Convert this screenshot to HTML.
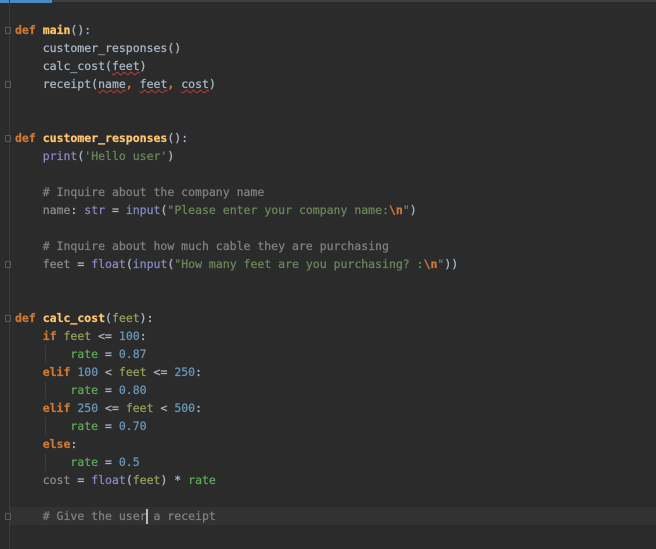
<!DOCTYPE html>
<html><head><meta charset="utf-8"><style>
html,body{margin:0;padding:0;background:#2b2b2b;width:656px;height:549px;overflow:hidden}
#ed{position:relative;width:656px;height:549px;background:#2b2b2b;font-family:"DejaVu Sans Mono","Liberation Mono",monospace;font-size:11.5px;color:#a9b7c6;-webkit-text-stroke:0.25px currentColor}
.top{position:absolute;left:0;top:0;width:656px;height:2px;background:#3c3f41}
.blue{position:absolute;left:0;top:0;width:52px;height:3px;background:#4a88c7}
.gut{position:absolute;left:9px;top:0;width:1px;height:549px;background:#3a3a3a}
.cur{position:absolute;left:10px;top:507px;width:646px;height:18px;background:#323232}
.ln{position:absolute;left:15px;height:18px;line-height:18px;white-space:pre}
.k{color:#cc7832;font-weight:bold}.f{color:#ffc66d;font-weight:bold}.n{color:#6897bb}.s{color:#6a8759}.c{color:#808080}
.b{color:#8888c6}.p{color:#94a05a}.r{color:#5fa85b}.g{color:#8a8a8a}
.w{text-decoration:underline wavy #b04040;text-decoration-thickness:1px}
.fold{position:absolute;left:5px;width:6px;height:7px;border:1px solid #5a5a5a;border-radius:1px;box-sizing:border-box}
.guide{position:absolute;left:45px;width:1px;height:18px;background:#3b3b3b}
.caret{display:inline-block;width:2px;height:15px;background:#bbb;vertical-align:middle;margin:0 -1px}
</style></head><body><div id="ed">
<div class="top"></div><div class="blue"></div><div class="gut"></div><div class="cur"></div>
<div class="fold" style="top:27px"></div><div class="fold" style="top:81px"></div>
<div class="fold" style="top:135px"></div><div class="fold" style="top:261px"></div>
<div class="fold" style="top:315px"></div><div class="fold" style="top:513px"></div>
<div class="guide" style="top:345px"></div><div class="guide" style="top:381px"></div>
<div class="guide" style="top:417px"></div><div class="guide" style="top:453px"></div>
<div class="ln" style="top:21px"><span class="k">def</span> <span class="f">main</span>():</div>
<div class="ln" style="top:39px">    customer_responses()</div>
<div class="ln" style="top:57px">    calc_cost(<span class="w">feet</span>)</div>
<div class="ln" style="top:75px">    receipt(<span class="w">name</span><span class="k">,</span> <span class="w">feet</span><span class="k">,</span> <span class="w">cost</span>)</div>
<div class="ln" style="top:129px"><span class="k">def</span> <span class="f">customer_responses</span>():</div>
<div class="ln" style="top:147px">    <span class="b">print</span>(<span class="s">'Hello user'</span>)</div>
<div class="ln" style="top:183px">    <span class="c"># Inquire about the company name</span></div>
<div class="ln" style="top:201px">    <span class="g">name</span>: <span class="b">str</span> = <span class="b">input</span>(<span class="s">"Please enter your company name:<span class="k">\n</span>"</span>)</div>
<div class="ln" style="top:237px">    <span class="c"># Inquire about how much cable they are purchasing</span></div>
<div class="ln" style="top:255px">    <span class="g">feet</span> = <span class="b">float</span>(<span class="b">input</span>(<span class="s">"How many feet are you purchasing? :<span class="k">\n</span>"</span>))</div>
<div class="ln" style="top:309px"><span class="k">def</span> <span class="f">calc_cost</span>(<span class="p">feet</span>):</div>
<div class="ln" style="top:327px">    <span class="k">if</span> <span class="p">feet</span> &lt;= <span class="n">100</span>:</div>
<div class="ln" style="top:345px">        <span class="r">rate</span> = <span class="n">0.87</span></div>
<div class="ln" style="top:363px">    <span class="k">elif</span> <span class="n">100</span> &lt; <span class="p">feet</span> &lt;= <span class="n">250</span>:</div>
<div class="ln" style="top:381px">        <span class="r">rate</span> = <span class="n">0.80</span></div>
<div class="ln" style="top:399px">    <span class="k">elif</span> <span class="n">250</span> &lt;= <span class="p">feet</span> &lt; <span class="n">500</span>:</div>
<div class="ln" style="top:417px">        <span class="r">rate</span> = <span class="n">0.70</span></div>
<div class="ln" style="top:435px">    <span class="k">else</span>:</div>
<div class="ln" style="top:453px">        <span class="r">rate</span> = <span class="n">0.5</span></div>
<div class="ln" style="top:471px">    <span class="g">cost</span> = <span class="b">float</span>(<span class="p">feet</span>) * <span class="r">rate</span></div>
<div class="ln" style="top:507px">    <span class="c"># Give the user<span class="caret"></span> a receipt</span></div>
</div></body></html>
